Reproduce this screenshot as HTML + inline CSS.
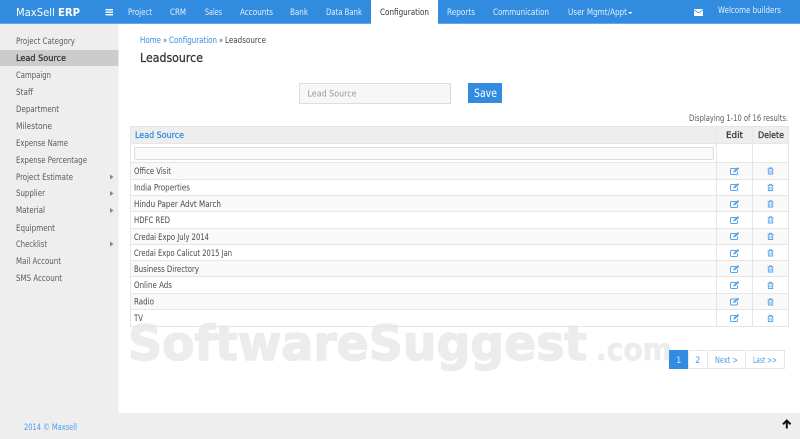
<!DOCTYPE html>
<html>
<head>
<meta charset="utf-8">
<title>Leadsource</title>
<style>
html,body{margin:0;padding:0;background:#fff;width:800px;height:439px;overflow:hidden}
svg{display:block;filter:blur(.2px)}
text{font-family:"DejaVu Sans","Liberation Sans",sans-serif;font-size:8.600px;fill:#5a5a5a;white-space:pre}
.n{fill:#e4f0fb}
.l{fill:#318ce0}
.t{fill:#484848}
.s{stroke-width:.25}
</style>
</head>
<body>
<svg width="800" height="439" viewBox="0 0 800 439" xmlns="http://www.w3.org/2000/svg">
<defs>
<g id="e" fill="none" stroke="#5aa5ea" stroke-width="1">
<path d="M6.500 1.500H1.200a.7.7 0 0 0-.7.7v4.600a.7.7 0 0 0 .7.7h5.600a.7.7 0 0 0 .7-.7V4.500"/>
<path d="M3.500 5.200 4 3.600 7.800.4 9 1.600 5.200 4.800Z" fill="#5aa5ea" stroke-width=".5"/>
</g>
<g id="d" fill="none" stroke="#5aa5ea" stroke-width=".9">
<path d="M.6 1.800h5.800M2.400 1.700V.8h2.200v.9M1.300 2v5h4.400V2"/>
<path d="M2.800 3.200v2.800M4.200 3.200v2.800" stroke-width=".7"/>
</g>
</defs>

<rect width="800" height="439" fill="#fff"/>
<!-- watermark -->
<text x="128" y="360" textLength="459" lengthAdjust="spacingAndGlyphs" style="font-weight:700;font-size:48px;fill:#ececec;stroke:#ececec;stroke-width:1.500px">SoftwareSuggest</text>
<text x="596" y="360" textLength="76" lengthAdjust="spacingAndGlyphs" style="font-weight:700;font-size:30px;fill:#ececec;stroke:#ececec;stroke-width:.8px">.com</text>

<!-- topbar -->
<rect width="800" height="24" fill="#318ce0"/>
<rect y="23" width="800" height="1" fill="#64a9ea"/>
<rect x="371" width="67" height="24" fill="#fff"/>
<text x="16" y="16" textLength="64" lengthAdjust="spacingAndGlyphs" style="font-size:10.500px;fill:#fff">MaxSell <tspan font-weight="700">ERP</tspan></text>
<rect x="105.500" y="9" width="7.500" height="1.400" fill="#fff"/>
<rect x="105.500" y="11.500" width="7.500" height="1.400" fill="#fff"/>
<rect x="105.500" y="14" width="7.500" height="1.400" fill="#fff"/>
<text class="n" x="128" y="15" lengthAdjust="spacingAndGlyphs" textLength="24">Project</text>
<text class="n" x="170" y="15" lengthAdjust="spacingAndGlyphs" textLength="16">CRM</text>
<text class="n" x="205" y="15" lengthAdjust="spacingAndGlyphs" textLength="17">Sales</text>
<text class="n" x="240" y="15" lengthAdjust="spacingAndGlyphs" textLength="33">Accounts</text>
<text class="n" x="290" y="15" lengthAdjust="spacingAndGlyphs" textLength="18">Bank</text>
<text class="n" x="326" y="15" lengthAdjust="spacingAndGlyphs" textLength="36">Data Bank</text>
<text x="380" y="15" lengthAdjust="spacingAndGlyphs" textLength="49" style="fill:#333">Configuration</text>
<text class="n" x="447" y="15" lengthAdjust="spacingAndGlyphs" textLength="28">Reports</text>
<text class="n" x="493" y="15" lengthAdjust="spacingAndGlyphs" textLength="56">Communication</text>
<text class="n" x="568" y="15" lengthAdjust="spacingAndGlyphs" textLength="59">User Mgmt/Appt</text>
<path d="M628 12h4.500l-2.250 2z" fill="#fff"/>
<rect x="694" y="9" width="9" height="7" rx=".6" fill="#fff"/>
<path d="M694 9.800l4.500 3 4.500-3" fill="none" stroke="#318ce0" stroke-width=".8"/>
<text class="n" x="718" y="13" lengthAdjust="spacingAndGlyphs" textLength="63">Welcome builders</text>

<!-- sidebar -->
<rect y="24" width="118.500" height="389" fill="#eee"/>
<rect y="50" width="118.500" height="16" fill="#ccc"/>
<text x="16" y="44" lengthAdjust="spacingAndGlyphs" textLength="59">Project Category</text>
<text x="16" y="61" lengthAdjust="spacingAndGlyphs" textLength="50" class="s" style="fill:#333;stroke:#333">Lead Source</text>
<text x="16" y="78" lengthAdjust="spacingAndGlyphs" textLength="35">Campaign</text>
<text x="16" y="95" lengthAdjust="spacingAndGlyphs" textLength="17">Staff</text>
<text x="16" y="112" lengthAdjust="spacingAndGlyphs" textLength="43">Department</text>
<text x="16" y="129" lengthAdjust="spacingAndGlyphs" textLength="36">Milestone</text>
<text x="16" y="146" lengthAdjust="spacingAndGlyphs" textLength="52">Expense Name</text>
<text x="16" y="163" lengthAdjust="spacingAndGlyphs" textLength="71">Expense Percentage</text>
<text x="16" y="180" lengthAdjust="spacingAndGlyphs" textLength="57">Project Estimate</text>
<text x="16" y="196" lengthAdjust="spacingAndGlyphs" textLength="29">Supplier</text>
<text x="16" y="213" lengthAdjust="spacingAndGlyphs" textLength="29">Material</text>
<text x="16" y="231" lengthAdjust="spacingAndGlyphs" textLength="39">Equipment</text>
<text x="16" y="247" lengthAdjust="spacingAndGlyphs" textLength="31">Checklist</text>
<text x="16" y="264" lengthAdjust="spacingAndGlyphs" textLength="45">Mail Account</text>
<text x="16" y="281" lengthAdjust="spacingAndGlyphs" textLength="46">SMS Account</text>
<path d="M110 174.500l3.500 2.500-3.500 2.500zM110 191l3.500 2.500-3.500 2.500zM110 208l3.500 2.500-3.500 2.500zM110 241.500l3.500 2.500-3.500 2.500z" fill="#888"/>

<!-- header of content -->
<text class="l" x="140" y="43" lengthAdjust="spacingAndGlyphs" textLength="21">Home</text>
<text x="163" y="43" lengthAdjust="spacingAndGlyphs" textLength="4">»</text>
<text class="l" x="169" y="43" lengthAdjust="spacingAndGlyphs" textLength="48">Configuration</text>
<text x="219" y="43" lengthAdjust="spacingAndGlyphs" textLength="4">»</text>
<text x="225" y="43" lengthAdjust="spacingAndGlyphs" textLength="41" style="fill:#444">Leadsource</text>
<text x="140" y="62" lengthAdjust="spacingAndGlyphs" textLength="63" class="s" style="font-size:12px;fill:#333;stroke:#333">Leadsource</text>

<!-- form -->
<rect x="299.500" y="83.500" width="151" height="20" fill="#f7f7f7" stroke="#ddd"/>
<text x="307.500" y="96.500" lengthAdjust="spacingAndGlyphs" textLength="49" style="fill:#999;font-size:9px">Lead Source</text>
<rect x="468" y="83" width="34" height="20" fill="#318ce0"/>
<text x="474" y="97" lengthAdjust="spacingAndGlyphs" textLength="23" style="fill:#fff;font-size:11.500px">Save</text>
<text x="689" y="121" lengthAdjust="spacingAndGlyphs" textLength="99">Displaying 1-10 of 16 results.</text>

<!-- table -->
<rect x="130" y="127" width="658" height="16" fill="#eee"/>
<rect x="130" y="162" width="658" height="17" fill="#f9f9f9"/>
<rect x="130" y="195" width="658" height="16" fill="#f9f9f9"/>
<rect x="130" y="228" width="658" height="16" fill="#f9f9f9"/>
<rect x="130" y="260" width="658" height="16" fill="#f9f9f9"/>
<rect x="130" y="293" width="658" height="16" fill="#f9f9f9"/>
<g fill="none" stroke="#e6e6e6">
<path d="M130 126.500H788.500M130 143.500H788.500M130 162.500H788.500M130 179.500H788.500M130 195.500H788.500M130 211.500H788.500M130 228.500H788.500M130 244.500H788.500M130 260.500H788.500M130 276.500H788.500M130 293.500H788.500M130 309.500H788.500M130 326.500H788.500"/>
<path d="M130.500 126V327M716.500 126V327M752.500 126V327M788.500 126V327"/>
</g>
<rect x="134.500" y="147.500" width="579" height="12" rx="1" fill="#fafafa" stroke="#ddd"/>
<text class="l s" x="135" y="138" lengthAdjust="spacingAndGlyphs" textLength="49" style="stroke:#318ce0">Lead Source</text>
<text class="s" x="726" y="138" lengthAdjust="spacingAndGlyphs" textLength="17" style="fill:#333;stroke:#333">Edit</text>
<text class="s" x="758" y="138" lengthAdjust="spacingAndGlyphs" textLength="26" style="fill:#333;stroke:#333">Delete</text>

<text class="t" x="134" y="174" lengthAdjust="spacingAndGlyphs" textLength="37">Office Visit</text>
<text class="t" x="134" y="190.500" lengthAdjust="spacingAndGlyphs" textLength="56">India Properties</text>
<text class="t" x="134" y="207" lengthAdjust="spacingAndGlyphs" textLength="87">Hindu Paper Advt March</text>
<text class="t" x="134" y="223" lengthAdjust="spacingAndGlyphs" textLength="36">HDFC RED</text>
<text class="t" x="134" y="240" lengthAdjust="spacingAndGlyphs" textLength="75">Credai Expo July 2014</text>
<text class="t" x="134" y="256" lengthAdjust="spacingAndGlyphs" textLength="98">Credai Expo Calicut 2015 Jan</text>
<text class="t" x="134" y="272" lengthAdjust="spacingAndGlyphs" textLength="65">Business Directory</text>
<text class="t" x="134" y="288" lengthAdjust="spacingAndGlyphs" textLength="38">Online Ads</text>
<text class="t" x="134" y="304.500" lengthAdjust="spacingAndGlyphs" textLength="20">Radio</text>
<text class="t" x="134" y="321" lengthAdjust="spacingAndGlyphs" textLength="9">TV</text>

<use href="#e" x="730" y="167"/><use href="#d" x="767" y="167"/>
<use href="#e" x="730" y="183"/><use href="#d" x="767" y="183.500"/>
<use href="#e" x="730" y="200"/><use href="#d" x="767" y="200"/>
<use href="#e" x="730" y="216"/><use href="#d" x="767" y="216"/>
<use href="#e" x="730" y="232"/><use href="#d" x="767" y="232.500"/>
<use href="#e" x="730" y="249"/><use href="#d" x="767" y="249"/>
<use href="#e" x="730" y="265"/><use href="#d" x="767" y="265"/>
<use href="#e" x="730" y="281"/><use href="#d" x="767" y="281.500"/>
<use href="#e" x="730" y="297.500"/><use href="#d" x="767" y="298"/>
<use href="#e" x="730" y="314"/><use href="#d" x="767" y="314.500"/>

<!-- pagination -->
<rect x="688.500" y="350.500" width="96" height="18" fill="#fff" stroke="#e6e6e6"/>
<path d="M707.500 350V369M745.500 350V369" stroke="#e6e6e6"/>
<rect x="669" y="350" width="19" height="19" fill="#318ce0"/>
<text x="676" y="363" style="fill:#d6e8f9">1</text>
<text x="695" y="363" style="fill:#4d9be6">2</text>
<text x="715" y="363" lengthAdjust="spacingAndGlyphs" textLength="23" style="fill:#4d9be6">Next &gt;</text>
<text x="753" y="363" lengthAdjust="spacingAndGlyphs" textLength="24" style="fill:#4d9be6">Last &gt;&gt;</text>

<!-- footer -->
<rect y="413" width="800" height="26" fill="#eee"/>
<text x="24" y="430" lengthAdjust="spacingAndGlyphs" textLength="53" style="fill:#4d9be6">2014 © Maxsell</text>
<path d="M786.800 428.500V421.500M783 424.300l3.800-3.800 3.800 3.800" fill="none" stroke="#111" stroke-width="2"/>
</svg>
</body>
</html>
